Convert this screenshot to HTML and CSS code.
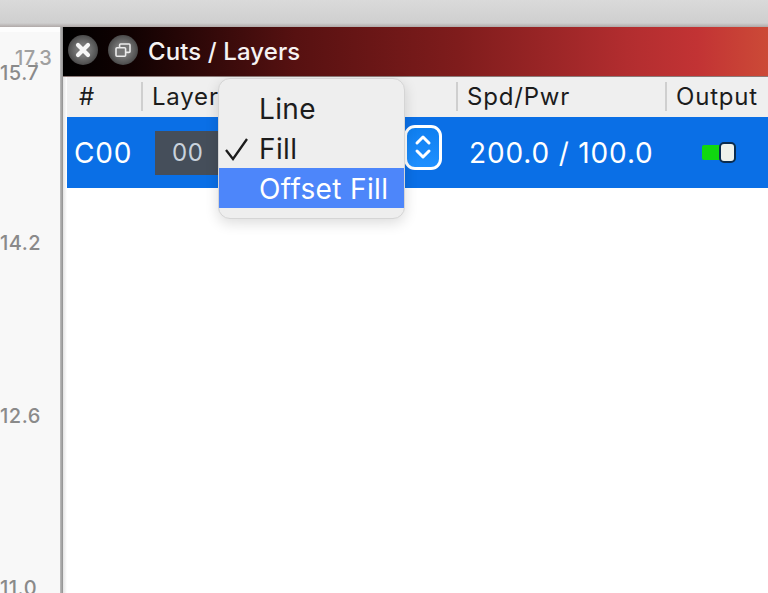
FILE: index.html
```html
<!DOCTYPE html>
<html lang="en">
<head>
<meta charset="utf-8">
<title>Cuts / Layers</title>
<link rel="stylesheet" href="styles.css">
</head>
<body>
<div class="topbar"></div>
<div class="main">
  <div class="ruler">
    <span class="tick t1">17.3</span>
    <span class="tick t2">15.7</span>
    <span class="tick t3">14.2</span>
    <span class="tick t4">12.6</span>
    <span class="tick t5">11.0</span>
  </div>
  <div class="sash"></div>
  <div class="panel">
    <div class="titlebar">
      <span class="winbtn">
        <svg width="18" height="18" viewBox="0 0 18 18"><path d="M4 4l10 10M14 4L4 14" stroke="#f6f6f6" stroke-width="4.2" stroke-linecap="round"/></svg>
      </span>
      <span class="winbtn">
        <svg width="20" height="20" viewBox="0 0 20 20" fill="none" stroke="#ececec" stroke-width="1.6"><rect x="3" y="7.8" width="9.6" height="8.4" rx="1"/><path d="M6.6 7.6V5a1 1 0 0 1 1-1H16a1 1 0 0 1 1 1v6.4a1 1 0 0 1-1 1h-3.2"/></svg>
      </span>
      <span class="title">Cuts / Layers</span>
    </div>
    <div class="table">
      <div class="head">
        <div class="hc c-num">#</div>
        <div class="hc c-layer">Layer</div>
        <div class="hc c-mode"></div>
        <div class="hc c-spd">Spd/Pwr</div>
        <div class="hc c-out">Output</div>
      </div>
      <div class="row">
        <div class="c-num name">C00</div>
        <div class="c-layer"><span class="layerbox">00</span></div>
        <div class="c-mode">
          <span class="stepper">
            <svg width="20" height="30" viewBox="0 0 20 30" fill="none" stroke="#fff" stroke-width="3" stroke-linecap="round" stroke-linejoin="round"><path d="M4 11l6-6 6 6M4 19l6 6 6-6"/></svg>
          </span>
        </div>
        <div class="c-spd val">200.0 / 100.0</div>
        <div class="c-out"><span class="toggle"><span class="knob"></span></span></div>
      </div>
    </div>
    <div class="menu">
      <div class="item"><span class="check"></span>Line</div>
      <div class="item">
        <span class="check"><svg width="26" height="24" viewBox="0 0 26 24" fill="none" stroke="#1c1c1c" stroke-width="2.3"><path d="M2 13l7 9L23 2"/></svg></span>Fill
      </div>
      <div class="item selected"><span class="check"></span>Offset Fill</div>
    </div>
  </div>
</div>
</body>
</html>
```
FILE: styles.css
```css
* { box-sizing: border-box; }
html, body { margin: 0; padding: 0; height: 593px; overflow: hidden; background: #fff; }
body { display: flex; flex-direction: column; font-family: Inter, "Liberation Sans", sans-serif; color: #1c1c1c; }
.topbar { height: 27px; flex: none; background: linear-gradient(#dadada, #cfcfcf 85%, #b0a9a8); }
.main { flex: 1; display: flex; min-height: 0; }
.ruler { position: relative; width: 60px; flex: none; background: #f8f8f8; overflow: hidden; border-top: 5px solid #fdfdfd; }
.tick { position: absolute; font-size: 20px; line-height: 24px; font-weight: 500; color: #8a8a8a; letter-spacing: 0.5px; }
.t1 { top: 14px; left: 15px; color: #a0a0a0; }
.t2 { top: 29px; left: 0; }
.t3 { top: 199px; left: 0; }
.t4 { top: 372px; left: 0; }
.t5 { top: 544px; left: 0; }
.sash { width: 3px; flex: none; background: linear-gradient(90deg, #bdbdbd, #8f8f8f); }
.panel { position: relative; flex: 1; min-width: 0; display: flex; flex-direction: column; }
.titlebar { height: 50px; flex: none; display: flex; align-items: center; gap: 10px; padding-left: 5px; padding-bottom: 3px;
  background: linear-gradient(90deg, #000 0%, #120202 10%, #571111 33%, #7f1c1c 56%, #b22d2f 80%, #c23334 90%, #cc4a37 100%); border-bottom: 1px solid #8c7a78; }
.winbtn { width: 30px; height: 30px; border-radius: 50%; display: flex; align-items: center; justify-content: center; background: radial-gradient(circle, #777 30%, #555 62%, #222 100%); }
.title { color: #f6f2f2; font-size: 24px; font-weight: 500; letter-spacing: 0.1px; margin-top: 3px; }
.table { flex: 1; padding-left: 4px; background: linear-gradient(90deg, #e3e3e3, #fff 4px); }
.head, .row { display: grid; grid-template-columns: 74px 95px 220px 209px 1fr; align-items: center; }
.head { height: 40px; padding-bottom: 2px; background: #efefef; font-size: 24px; letter-spacing: 0.8px; }
.hc { height: 29px; line-height: 29px; padding-left: 9px; border-left: 2px solid #cfcfcf; white-space: nowrap; }
.hc.c-num { border-left: 0; padding-left: 12px; }
.row { height: 71px; background: #0a6fe6; color: #fff; font-size: 28px; letter-spacing: 0.85px; }
.name { padding-left: 7px; }
.layerbox { display: block; width: 90px; height: 44px; line-height: 44px; margin-left: 14px; padding-left: 17px; background: #454e5a; color: #c9d2dc; font-size: 24px; letter-spacing: 0.5px; }
.c-mode { display: flex; justify-content: flex-end; padding-right: 14px; }
.stepper { width: 38px; height: 45px; margin-top: -11px; display: flex; align-items: center; justify-content: center; background: linear-gradient(#0f7ff0, #1f90ff); border: 3px solid #fff; border-radius: 11px; }
.val { padding-left: 13px; white-space: nowrap; }
.c-out { display: flex; justify-content: flex-start; padding-left: 37px; }
.hc.c-out { display: block; padding-left: 9px; }
.toggle { width: 34px; height: 15px; display: flex; justify-content: flex-end; align-items: center; background: #10d810; border-radius: 2px; }
.knob { width: 17px; height: 21px; background: #eef2ec; border: 2px solid #0a2c50; border-radius: 5px; flex: none; }
.menu { position: absolute; left: 155px; top: 51px; width: 187px; height: 141px; padding-top: 9px; background: #eeeeee; border: 1px solid #d5d5d5; border-radius: 12px; box-shadow: 0 4px 14px rgba(0,0,0,.14); font-size: 28px; letter-spacing: 0.35px; color: #1c1c1c; overflow: hidden; }
.item { height: 40px; padding-top: 2px; display: flex; align-items: center; white-space: nowrap; }
.check { width: 40px; flex: none; padding-left: 5px; display: flex; align-items: center; }
.selected { background: #4d86fa; color: #fff; }
```
